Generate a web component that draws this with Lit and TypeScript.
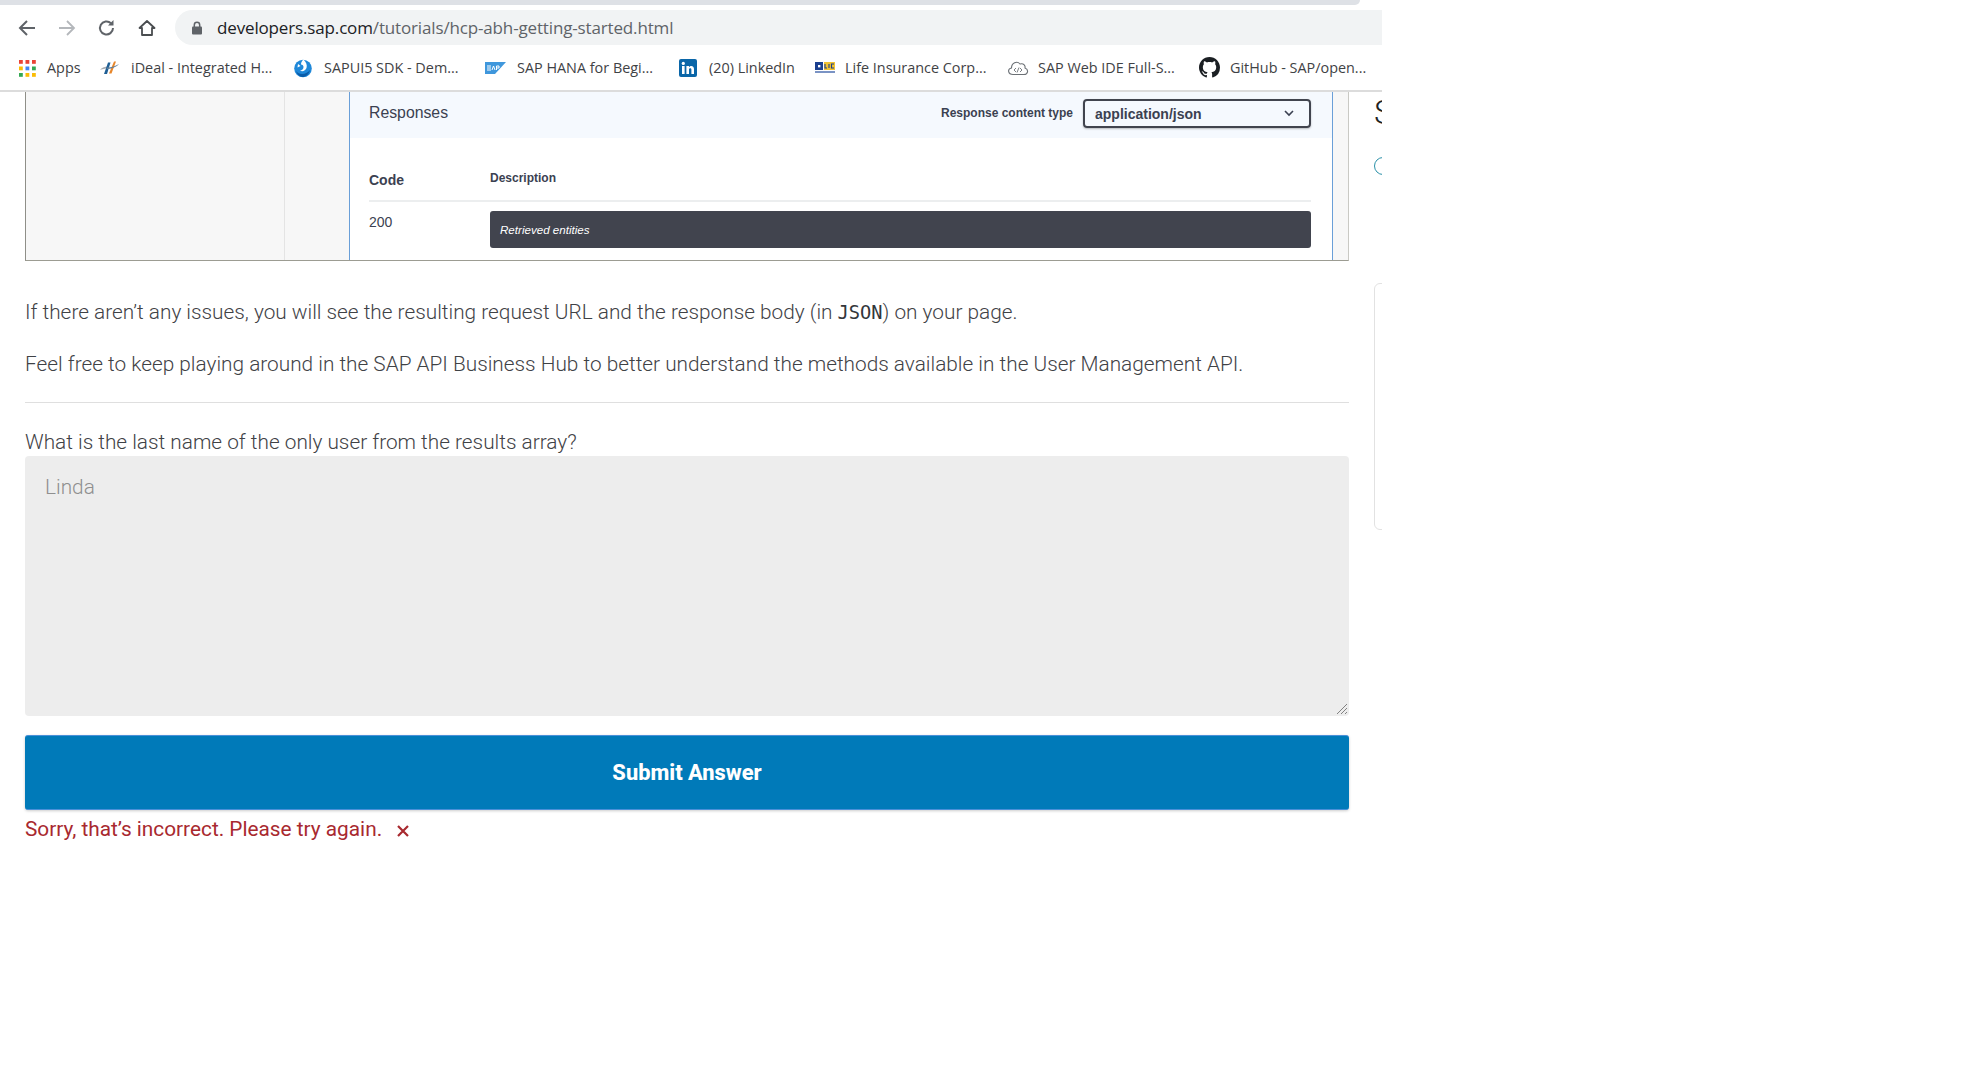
import { LitElement, html, css, svg } from "lit";
import { customElement } from "lit/decorators.js";

const marks = [
  { label: "Apps", icon: "apps", w: 82, g: 11 },
  { label: "iDeal - Integrated H...", icon: "ideal", w: 193, g: 11 },
  { label: "SAPUI5 SDK - Dem...", icon: "ui5", w: 192, g: 11 },
  { label: "SAP HANA for Begi...", icon: "sap", w: 194, g: 11 },
  { label: "(20) LinkedIn", icon: "in", w: 136, g: 12 },
  { label: "Life Insurance Corp...", icon: "lic", w: 192, g: 10 },
  { label: "SAP Web IDE Full-S...", icon: "cloud", w: 192, g: 9 },
  { label: "GitHub - SAP/open...", icon: "gh", w: 170, g: 10 },
];

function icon(k: string) {
  switch (k) {
    case "apps": {
      const c = ["#ea4335", "#ea4335", "#ea4335", "#fbbc05", "#4285f4", "#34a853", "#34a853", "#fbbc05", "#fbbc05"];
      return html`<svg width="18" height="18" viewBox="0 0 18 18">${c.map((f, i) => svg`<rect x=${(i % 3) * 6.5 + 1} y=${Math.floor(i / 3) * 6.5 + 1} width="3.8" height="3.8" fill=${f}></rect>`)}</svg>`;
    }
    case "ideal":
      return html`<svg width="20" height="18" viewBox="0 0 20 18"><path d="M0 11 C2 8 5 7.500 8 7.500 L7.500 9.500 C5 9.500 3 10 0 11Z" fill="#a9adb2"/><path d="M8 3.500 L10.500 3.500 L7 15 L4 15Z" fill="#1f5f95"/><path d="M14 2.500 L16 2.500 L11.500 14.500 L9 14.500Z" fill="#e8862a"/><path d="M7 8.500 C11 8.500 15 7.500 19 5 C16 8.500 11 10 6.500 10Z" fill="#5f7f9c"/></svg>`;
    case "ui5":
      return html`<svg width="20" height="20" viewBox="0 0 20 20"><circle cx="10" cy="10.500" r="8.800" fill="#1f88d9"/><path d="M10.500 1.500 C13 4 14.500 7 13.500 10 C12.500 13 9 14 7 12.500 C9 12.500 10.500 11 10.500 9 C10.500 7.500 9.500 6.500 8 6.500 C8 4.500 9 2.500 10.500 1.500Z" fill="#fff"/><path d="M5 6 L7.500 8 L4.500 9.500Z" fill="#fff"/><path d="M3 13 C6 17 13 17 17 12 C16 17 12 19.300 9 19 C6 18.700 4 16 3 13Z" fill="#0b5ca8"/></svg>`;
    case "sap":
      return html`<svg width="21" height="12" viewBox="0 0 21 12"><path d="M0 0 H21 L10 12 H0Z" fill="#3f97dc"/><path d="M2 4 H6 M2 6 H6 M2 8 H6 M7 8 L8.500 4 L10 8 M11.500 8 V4 H14 V6 H11.500" fill="none" stroke="#fff" stroke-width="1"/></svg>`;
    case "in":
      return html`<svg width="18" height="18" viewBox="0 0 18 18"><rect width="18" height="18" rx="2" fill="#0a66a8"/><rect x="3" y="7" width="2.600" height="8" fill="#fff"/><circle cx="4.300" cy="4.400" r="1.600" fill="#fff"/><path d="M7.400 7 H10 V8.200 C11.400 6.200 15 6.600 15 10 V15 H12.400 V10.600 C12.400 8.800 10 8.800 10 10.600 V15 H7.400Z" fill="#fff"/></svg>`;
    case "lic":
      return html`<svg width="20" height="13" viewBox="0 0 20 13"><rect x="0" y="1" width="8" height="8" fill="#1b3f8f"/><rect x="3" y="4" width="2.400" height="2.400" fill="#fff"/><rect x="9" y="1" width="11" height="8" fill="#f1c232"/><path d="M10 3 V7 H12 M14 3 V7 M19 3 H16.500 V7 H19" fill="none" stroke="#1b3f8f" stroke-width="1.100"/><rect x="0" y="10" width="20" height="2" fill="#7a93c4"/></svg>`;
    case "cloud":
      return html`<svg width="22" height="16" viewBox="0 0 22 16"><path d="M6 14.500 C1 14.500 0 9 4.500 8 C4.500 3 10 0.500 13 4 C17 3 18.500 6 18 8 C22 9.500 21 14.500 17 14.500Z" fill="none" stroke="#6b7075" stroke-width="1.100"/><path d="M9 8 L7 10 L9 12 M13 8 L15 10 L13 12 M12 7.500 L10 12.500" fill="none" stroke="#6b7075" stroke-width="0.900"/></svg>`;
    default:
      return html`<svg width="21" height="21" viewBox="0 0 16 16"><path fill="#1b1f23" d="M8 0C3.580 0 0 3.580 0 8c0 3.540 2.290 6.530 5.470 7.590.4.070.55-.17.55-.38 0-.19-.01-.82-.01-1.490-2.010.37-2.530-.49-2.690-.94-.09-.23-.48-.94-.82-1.130-.28-.15-.68-.52-.01-.53.63-.01 1.080.58 1.230.82.72 1.210 1.870.87 2.330.66.070-.52.28-.87.51-1.070-1.780-.2-3.640-.89-3.640-3.950 0-.87.31-1.590.82-2.150-.08-.2-.36-1.020.08-2.120 0 0 .67-.21 2.200.82.64-.18 1.320-.27 2-.27s1.360.09 2 .27c1.530-1.040 2.200-.82 2.200-.82.44 1.100.16 1.920.08 2.120.51.56.82 1.270.82 2.150 0 3.070-1.870 3.750-3.650 3.950.29.25.54.73.54 1.480 0 1.070-.01 1.930-.01 2.200 0 .21.15.46.55.38A8.010 8.010 0 0016 8c0-4.420-3.580-8-8-8z"/></svg>`;
  }
}

@customElement("app-root")
export class AppRoot extends LitElement {
  static styles = css`
    :host { display: block; width: 1984px; height: 1067px; background: #fff; overflow: hidden; font-family: "Open Sans", "Liberation Sans", sans-serif; color: #4a4d50; }
    .chrome { width: 1382px; }
    .strip { height: 5px; width: 1360px; background: #dee1e6; border-bottom-right-radius: 8px; }
    .nav { height: 40px; display: flex; align-items: center; padding-top: 5px; box-sizing: border-box; }
    .btns { width: 175px; display: flex; align-items: center; padding-left: 17px; box-sizing: border-box; gap: 20px; flex: none; }
    .btns svg { display: block; flex: none; }
    .omni { flex: 1; height: 35px; background: #f1f3f4; border-radius: 18px 0 0 18px; display: flex; align-items: center; padding-left: 16px; font-family: "Open Sans", sans-serif; font-size: 17px; letter-spacing: -0.15px; color: #5f6368; }
    .omni svg { margin-right: 14px; flex: none; }
    .omni b { font-weight: 400; color: #202124; }
    .bm { height: 45px; display: flex; align-items: center; padding-left: 18px; border-bottom: 2px solid #dcdcdc; font-size: 14.4px; color: #3f4245; }
    .mark { display: flex; align-items: center; flex: none; white-space: nowrap; }
    .mark svg { flex: none; }
    .page { width: 1384px; position: relative; }
    .shot { margin-left: 25px; width: 1324px; height: 169px; display: grid; grid-template-columns: 259px 65px 1fr 16px; border-left: 1px solid #8f8f88; border-bottom: 1.5px solid #9c9c92; box-sizing: border-box; border-right: 1px solid #c9c9c4; font-family: "Liberation Sans", Arial, sans-serif; color: #3b4151; }
    .p1 { background: #f7f7f7; border-right: 1px solid #e4e4e4; }
    .p2 { background: #f7f7f7; border-right: 1px solid #6a9fd8; }
    .p4 { background: #f7f7f7; border-left: 1px solid #6a9fd8; }
    .resp { display: flex; flex-direction: column; min-width: 0; background: #fff; }
    .rh { height: 46px; background: #f5f9fe; display: flex; align-items: center; padding: 0 21px 4px 19px; box-sizing: border-box; font-size: 15.8px; }
    .rh .t { flex: 1; }
    .rh .l { font-size: 12px; font-weight: 700; margin-right: 10px; }
    .sel { width: 228px; height: 29px; box-sizing: border-box; border: 2px solid #41444e; border-radius: 4px; display: flex; align-items: center; justify-content: space-between; padding: 0 15px 0 10px; font-size: 14px; font-weight: 700; margin-top: 1px; box-shadow: 0 1px 2px rgba(0,0,0,.25); }
    .tb { padding: 0 21px 0 19px; flex: 1; display: flex; flex-direction: column; }
    .cols { display: grid; grid-template-columns: 121px 1fr; height: 64px; align-items: end; padding-bottom: 12px; box-sizing: border-box; border-bottom: 2px solid #eceeef; font-weight: 700; }
    .cols .c { font-size: 14px; }
    .cols .d { font-size: 12px; padding-bottom: 3px; }
    .row { display: grid; grid-template-columns: 121px 1fr; padding-top: 9px; }
    .code { font-size: 14px; padding-top: 3px; }
    .desc { height: 37px; background: #41444e; border-radius: 3px; color: #fff; font-size: 11.6px; font-style: italic; display: flex; align-items: center; padding-left: 10px; }
    .main { margin-left: 25px; width: 1324px; font-family: Roboto, "Open Sans", sans-serif; font-weight: 300; font-size: 20.8px; color: #3f4246; }
    p { margin: 0; line-height: 28px; }
    .p-a { margin-top: 37px; }
    .p-b { margin-top: 23px; }
    code { font-family: "DejaVu Sans Mono", monospace; font-size: 18.7px; font-weight: 400; color: #33363a; }
    hr { border: 0; border-top: 1px solid #dfdfdf; margin: 24px 0 0; }
    .q { margin-top: 25px; height: 28px; line-height: 28px; }
    .ta { position: relative; height: 260px; background: #ededed; border-radius: 4px; padding: 17px 20px; box-sizing: border-box; color: #8f8f8f; line-height: 28px; }
    .grip { position: absolute; right: 1px; bottom: 1px; }
    .submit { margin-top: 19px; height: 75px; background: #007ab9; border-top: 1px solid #4a90d9; border-bottom: 1px solid #4a90d9; border-radius: 3px; box-sizing: border-box; display: flex; align-items: center; justify-content: center; color: #fff; font-weight: 800; font-size: 21.8px; box-shadow: 0 1px 3px rgba(0,0,0,.2); }
    .err { color: #a8292f; margin-top: 5px; line-height: 28px; display: flex; align-items: center; font-weight: 400; }
    .err svg { margin-left: 14px; margin-top: 3px; }
    .side { position: absolute; left: 1374px; top: 0; width: 8px; height: 700px; overflow: hidden; }
    .side .s { position: absolute; left: 0; top: 0; font-family: Roboto, sans-serif; font-weight: 300; font-size: 34px; line-height: 40px; color: #222; }
    .side .o { position: absolute; left: 0; top: 65px; width: 18px; height: 18px; border: 1.5px solid #2a90a8; border-radius: 50%; box-sizing: border-box; }
    .side .card { position: absolute; left: 0; top: 191px; width: 20px; height: 247px; border: 1px solid #e2e2e2; border-radius: 6px; box-sizing: border-box; }
  `;

  render() {
    return html`
      <div class="chrome">
        <div class="strip"></div>
        <div class="nav">
          <div class="btns">
            <svg width="20" height="20" viewBox="0 0 20 20"><path d="M18 10H3M10 3 L3 10 L10 17" fill="none" stroke="#5f6368" stroke-width="2"/></svg>
            <svg width="20" height="20" viewBox="0 0 20 20"><path d="M2 10H17M10 3 L17 10 L10 17" fill="none" stroke="#b4b7bb" stroke-width="1.800"/></svg>
            <svg width="20" height="20" viewBox="0 0 20 20"><path d="M16 10 A6.500 6.500 0 1 1 14 5.300" fill="none" stroke="#5f6368" stroke-width="2"/><path d="M16.500 2 V7.500 H11Z" fill="#5f6368"/></svg>
            <svg width="20" height="20" viewBox="0 0 20 20"><path d="M10 3 L2.500 10 H5 V17 H15 V10 H17.500Z" fill="none" stroke="#4a4d50" stroke-width="1.800" stroke-linejoin="round"/></svg>
          </div>
          <div class="omni">
            <svg width="12" height="14" viewBox="0 0 12 14"><rect x="1" y="5.500" width="10" height="8" rx="1" fill="#5f6368"/><path d="M3.300 6 V4 a2.700 2.700 0 0 1 5.400 0 V6" fill="none" stroke="#5f6368" stroke-width="1.500"/></svg>
            <span><b>developers.sap.com</b>/tutorials/hcp-abh-getting-started.html</span>
          </div>
        </div>
        <div class="bm">
          ${marks.map((m) => html`<div class="mark" style="width:${m.w}px;gap:${m.g}px">${icon(m.icon)}<span>${m.label}</span></div>`)}
        </div>
      </div>
      <div class="page">
        <div class="shot">
          <div class="p1"></div>
          <div class="p2"></div>
          <div class="resp">
            <div class="rh">
              <span class="t">Responses</span>
              <span class="l">Response content type</span>
              <div class="sel"><span>application/json</span>
                <svg width="10" height="7" viewBox="0 0 10 7"><path d="M1 1 L5 5 L9 1" fill="none" stroke="#3b4151" stroke-width="1.600"/></svg>
              </div>
            </div>
            <div class="tb">
              <div class="cols"><span class="c">Code</span><span class="d">Description</span></div>
              <div class="row"><span class="code">200</span><div class="desc">Retrieved entities</div></div>
            </div>
          </div>
          <div class="p4"></div>
        </div>
        <div class="main">
          <p class="p-a">If there aren’t any issues, you will see the resulting request URL and the response body (in <code>JSON</code>) on your page.</p>
          <p class="p-b">Feel free to keep playing around in the SAP API Business Hub to better understand the methods available in the User Management API.</p>
          <hr />
          <div class="q">What is the last name of the only user from the results array?</div>
          <div class="ta">Linda
            <svg class="grip" width="12" height="12" viewBox="0 0 12 12"><path d="M1 11 L11 1 M5 11 L11 5 M9 11 L11 9" stroke="#666" stroke-width="0.800" fill="none"/></svg>
          </div>
          <div class="submit">Submit Answer</div>
          <div class="err">Sorry, that’s incorrect. Please try again.
            <svg width="14" height="14" viewBox="0 0 14 14"><path d="M2 2 L12 12 M12 2 L2 12" stroke="#a8292f" stroke-width="2.200"/></svg>
          </div>
        </div>
        <div class="side">
          <span class="s">S</span><span class="o"></span><span class="card"></span>
        </div>
      </div>
    `;
  }
}
